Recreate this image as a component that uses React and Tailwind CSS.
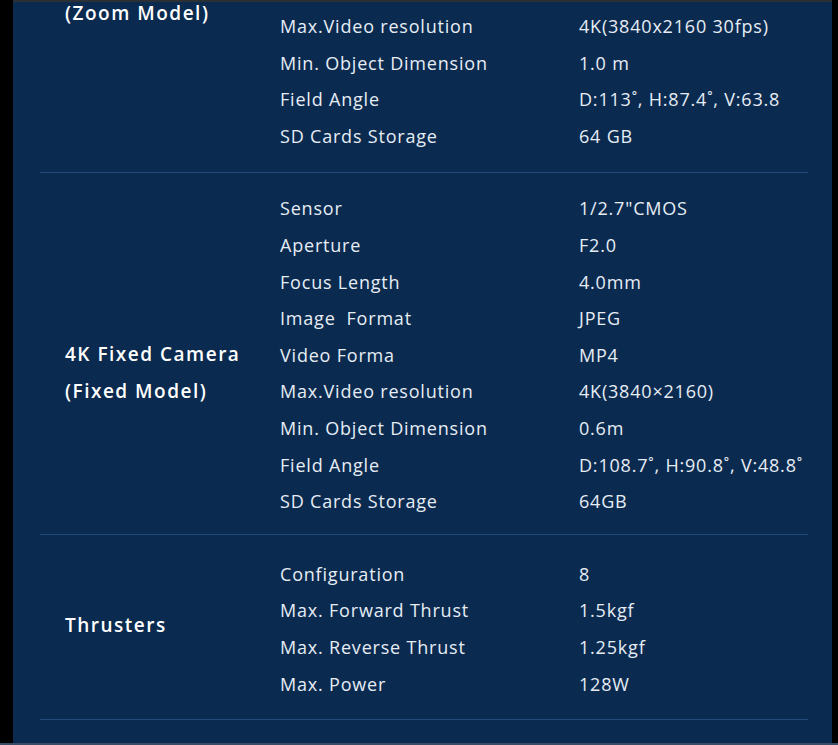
import React from 'react';

const sections = [
  {
    label: ['(Zoom Model)'],
    pad: 'pt-[6px] pb-[18px]',
    labelPad: '-mt-[13px]',
    rows: [
      ['Max.Video resolution', '4K(3840x2160 30fps)'],
      ['Min. Object Dimension', '1.0 m'],
      ['Field Angle', 'D:113˚, H:87.4˚, V:63.8'],
      ['SD Cards Storage', '64 GB'],
    ],
  },
  {
    label: ['4K Fixed Camera', '(Fixed Model)'],
    pad: 'pt-[17px] pb-[14px]',
    labelPad: 'pt-[146px]',
    rows: [
      ['Sensor', '1/2.7"CMOS'],
      ['Aperture', 'F2.0'],
      ['Focus Length', '4.0mm'],
      ['Image  Format', 'JPEG'],
      ['Video Forma', 'MP4'],
      ['Max.Video resolution', '4K(3840×2160)'],
      ['Min. Object Dimension', '0.6m'],
      ['Field Angle', 'D:108.7˚, H:90.8˚, V:48.8˚'],
      ['SD Cards Storage', '64GB'],
    ],
  },
  {
    label: ['Thrusters'],
    pad: 'pt-[21px] pb-[17px]',
    labelPad: 'pt-[51px]',
    rows: [
      ['Configuration', '8'],
      ['Max. Forward Thrust', '1.5kgf'],
      ['Max. Reverse Thrust', '1.25kgf'],
      ['Max. Power', '128W'],
    ],
  },
];

const Section = ({ section }) => (
  <div className={`flex ml-[27px] mr-[24px] border-b border-[#23497a] ${section.pad}`}>
    <div
      className={`w-[240px] pl-[25px] flex flex-col text-[19px] font-semibold tracking-[1.5px] leading-[36.5px] text-white ${section.labelPad}`}
    >
      {section.label.map((l) => (
        <span key={l} className="whitespace-pre">{l}</span>
      ))}
    </div>
    <div className="flex-1">
      {section.rows.map(([k, v]) => (
        <div key={k} className="flex text-[18px] tracking-[0.8px] leading-[36.6px] text-[#e6edf5]">
          <span className="w-[299px] whitespace-pre">{k}</span>
          <span className="whitespace-pre">{v}</span>
        </div>
      ))}
    </div>
  </div>
);

export default function App() {
  return (
    <div className="w-[838px] h-[745px] bg-black overflow-hidden">
      <div
        className="ml-[13px] mr-[6px] h-[743px] bg-[#0b2a4f] border-t-2 border-[#2b2f36] overflow-hidden"
        style={{ fontFamily: '"Open Sans", "Noto Sans", sans-serif' }}
      >
        {sections.map((s, i) => (
          <Section key={i} section={s} />
        ))}
      </div>
      <div className="h-[2px] bg-[#3a4d66]" />
    </div>
  );
}
